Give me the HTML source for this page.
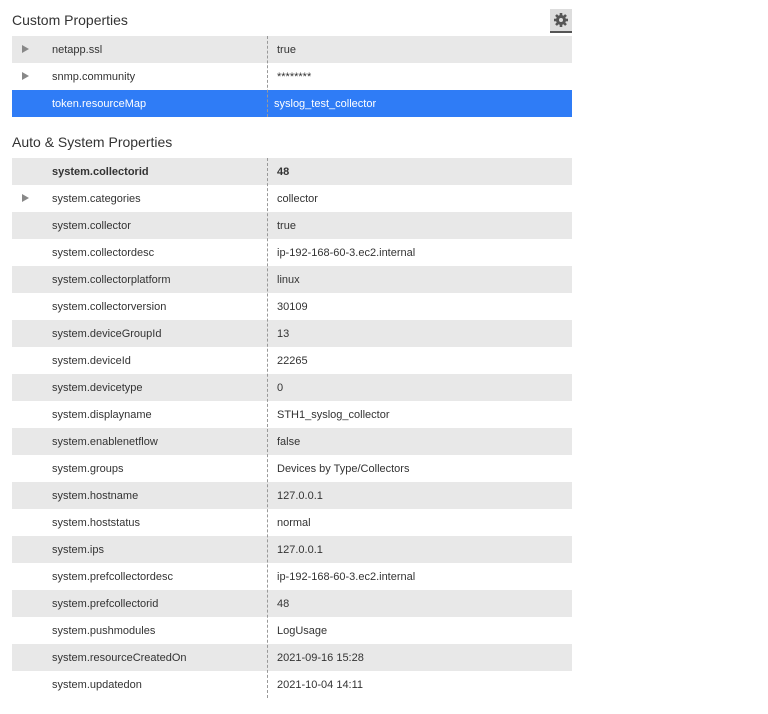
<!DOCTYPE html>
<html><head><style>
body{margin:0;background:#fff;font-family:"Liberation Sans",sans-serif;color:#333;width:768px;height:714px;overflow:hidden;position:relative}
h2{position:absolute;left:12px;margin:0;font-weight:normal;font-size:14px;color:#333}
.t{position:absolute;left:12px;width:560px}
.r{height:27px;position:relative;font-size:11px;line-height:29px}
.r:nth-child(odd){background:#e8e8e8}
.r span{position:absolute}
.n{left:40px}.v{left:265px}
.a{left:10px;top:9px;width:0;height:0;border-left:7px solid #888;border-top:4.5px solid transparent;border-bottom:4.5px solid transparent}
.d{position:absolute;left:255px;top:0;bottom:0;border-left:1px dashed #999;z-index:2}
.sel{background:#2f7cf6!important;color:#fff}
.gear{position:absolute;left:550px;top:9px;width:22px;height:22px;background:#ddd;border-bottom:2px solid #555}
</style></head><body>
<h2 style="top:12px">Custom Properties</h2>
<div class="gear"><svg width="22" height="22" viewBox="0 0 22 22"><g fill="#555"><circle cx="11" cy="11" r="5"/><g stroke="#555" stroke-width="2.6"><line x1="11" y1="4" x2="11" y2="18"/><line x1="4" y1="11" x2="18" y2="11"/><line x1="6" y1="6" x2="16" y2="16"/><line x1="16" y1="6" x2="6" y2="16"/></g></g><circle cx="11" cy="11" r="2" fill="#ddd"/></svg></div>
<div class="t" style="top:36px">
<div class="r"><span class="a"></span><span class="n">netapp.ssl</span><span class="v">true</span></div>
<div class="r" style="background:#fff"><span class="a"></span><span class="n">snmp.community</span><span class="v">********</span></div>
<div class="r sel"><span class="n">token.resourceMap</span><span class="v" style="left:262px">syslog_test_collector</span></div>
<div class="d"></div>
</div>
<h2 style="top:134px">Auto &amp; System Properties</h2>
<div class="t" style="top:158px">
<div class="r" style="font-weight:bold"><span class="n">system.collectorid</span><span class="v">48</span></div>
<div class="r"><span class="a"></span><span class="n">system.categories</span><span class="v">collector</span></div>
<div class="r"><span class="n">system.collector</span><span class="v">true</span></div>
<div class="r"><span class="n">system.collectordesc</span><span class="v">ip-192-168-60-3.ec2.internal</span></div>
<div class="r"><span class="n">system.collectorplatform</span><span class="v">linux</span></div>
<div class="r"><span class="n">system.collectorversion</span><span class="v">30109</span></div>
<div class="r"><span class="n">system.deviceGroupId</span><span class="v">13</span></div>
<div class="r"><span class="n">system.deviceId</span><span class="v">22265</span></div>
<div class="r"><span class="n">system.devicetype</span><span class="v">0</span></div>
<div class="r"><span class="n">system.displayname</span><span class="v">STH1_syslog_collector</span></div>
<div class="r"><span class="n">system.enablenetflow</span><span class="v">false</span></div>
<div class="r"><span class="n">system.groups</span><span class="v">Devices by Type/Collectors</span></div>
<div class="r"><span class="n">system.hostname</span><span class="v">127.0.0.1</span></div>
<div class="r"><span class="n">system.hoststatus</span><span class="v">normal</span></div>
<div class="r"><span class="n">system.ips</span><span class="v">127.0.0.1</span></div>
<div class="r"><span class="n">system.prefcollectordesc</span><span class="v">ip-192-168-60-3.ec2.internal</span></div>
<div class="r"><span class="n">system.prefcollectorid</span><span class="v">48</span></div>
<div class="r"><span class="n">system.pushmodules</span><span class="v">LogUsage</span></div>
<div class="r"><span class="n">system.resourceCreatedOn</span><span class="v">2021-09-16 15:28</span></div>
<div class="r"><span class="n">system.updatedon</span><span class="v">2021-10-04 14:11</span></div>
<div class="d"></div>
</div>
</body></html>
